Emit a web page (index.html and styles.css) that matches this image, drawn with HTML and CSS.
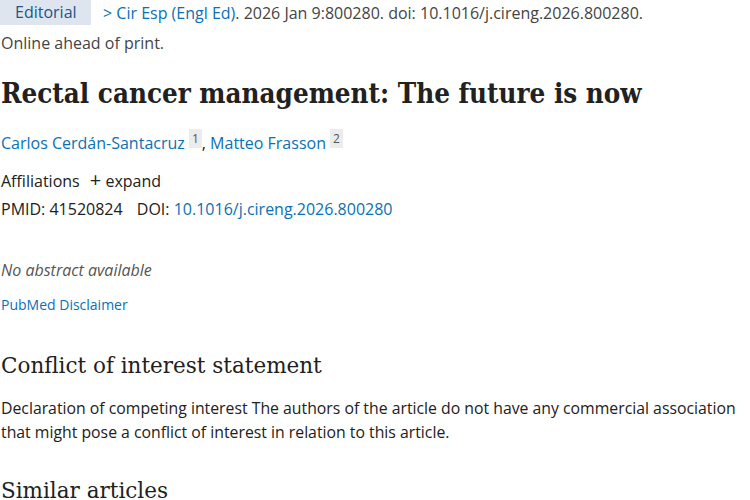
FILE: index.html
```html
<!DOCTYPE html>
<html>
<head>
<meta charset="utf-8">
<link rel="stylesheet" href="styles.css">
</head>
<body>
<main class="page">
  <div class="cite">
    <span class="badge">Editorial</span>
    <span class="journal"><span class="chev">&gt;</span> <a class="link">Cir Esp (Engl Ed)</a>. 2026 Jan 9:800280. doi: 10.1016/j.cireng.2026.800280.</span>
  </div>
  <div class="status">Online ahead of print.</div>
  <h1 class="title">Rectal cancer management: The future is now</h1>
  <div class="authors">
    <a class="link">Carlos Cerdán-Santacruz</a> <sup class="aff">1</sup>, <a class="link">Matteo Frasson</a> <sup class="aff">2</sup>
  </div>
  <div class="affils">Affiliations <span class="expand"><span class="plus">+</span> expand</span></div>
  <div class="ids">PMID: 41520824 <span class="doi">DOI: <a class="link">10.1016/j.cireng.2026.800280</a></span></div>
  <div class="noabs">No abstract available</div>
  <div class="disclaimer"><a class="link">PubMed Disclaimer</a></div>
  <h2 class="sec">Conflict of interest statement</h2>
  <p class="coi">Declaration of competing interest The authors of the article do not have any commercial association that might pose a conflict of interest in relation to this article.</p>
  <h2 class="sec similar">Similar articles</h2>
</main>
</body>
</html>
```
FILE: styles.css
```css
html, body { margin: 0; padding: 0; background: #fff; }
body { font-family: "Open Sans", "Noto Sans", sans-serif; color: #212121; font-size: 16px; overflow: hidden; }
.page { padding: 0 0 0 1px; }
.link { color: #0a71b4; text-decoration: none; }
.cite { display: flex; align-items: center; height: 25px; color: #444; }
.badge { background: #dfe5ee; color: #20558a; height: 25px; width: 91px; box-sizing: border-box; padding-left: 15px; line-height: 25px; margin-left: -1px; }
.journal { margin-left: 12px; }
.chev { color: #0a71b4; }
.status { margin-top: 7px; color: #444; line-height: 22px; }
.title { font-family: "DejaVu Serif", serif; font-stretch: condensed; font-size: 27.5px; font-weight: bold; margin: 19px 0 0; line-height: 40px; color: #212121; }
.authors { margin-top: 15px; line-height: 22px; }
.aff { background: #ececec; color: #555; font-size: 12px; padding: 1px 3px; vertical-align: 6px; }
.affils { margin-top: 15px; line-height: 22px; }
.expand { margin-left: 6px; }
.plus { font-size: 20px; }
.ids { margin-top: 6px; line-height: 22px; }
.doi { margin-left: 10px; }
.noabs { margin-top: 39px; font-style: italic; color: #555; line-height: 22px; }
.disclaimer { margin-top: 14px; font-size: 14px; line-height: 20px; }
.sec { font-family: "DejaVu Serif", serif; font-weight: normal; font-size: 21.5px; margin: 36px 0 0; line-height: 30px; }
.coi { margin: 15px 0 0; line-height: 24px; font-size: 15.8px; font-stretch: 88%; font-family: "Open Sans", "DejaVu Sans", sans-serif; }
.similar { margin-top: 32px; }
```
